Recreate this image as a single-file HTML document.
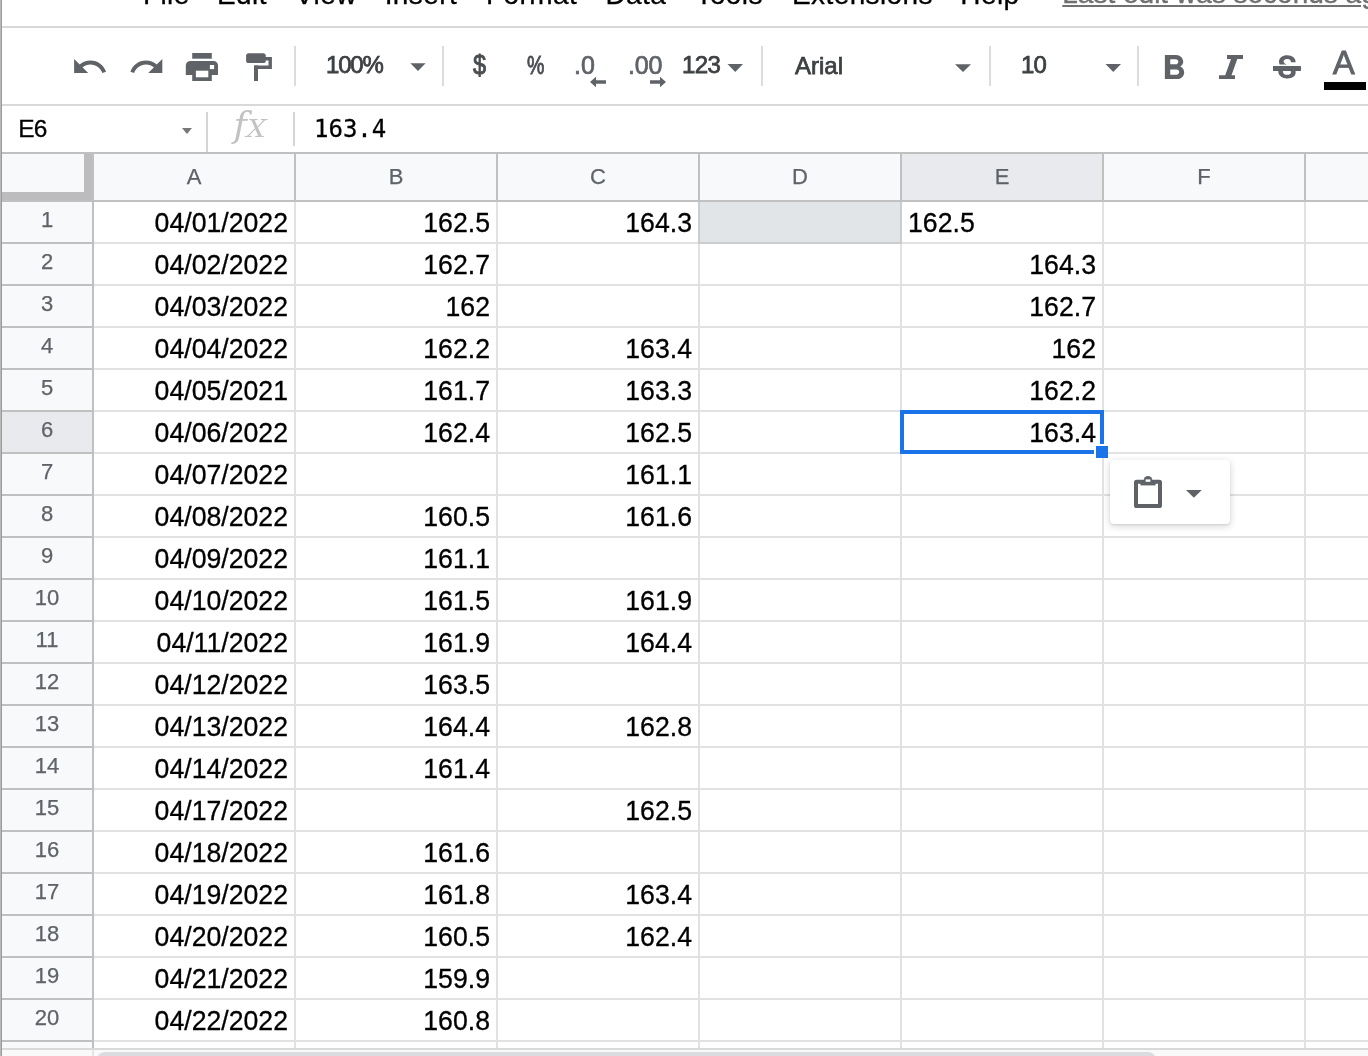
<!DOCTYPE html>
<html lang="en"><head><meta charset="utf-8"><title>Sheet</title>
<style>
html,body{margin:0;padding:0;background:#fff;}
body{width:1368px;height:1056px;overflow:hidden;position:relative;font-family:"Liberation Sans",sans-serif;}
div{position:absolute;box-sizing:border-box;}
svg{position:absolute;overflow:visible;}
.hl{background:#c0c0c0;}
.gl{background:#e2e2e2;}
.menu{top:-23px;height:36px;line-height:36px;font-size:28px;color:#000;white-space:nowrap;letter-spacing:0.4px;-webkit-text-stroke:0.3px;}
.tb{font-size:24px;color:#3c4043;white-space:nowrap;line-height:30px;height:30px;-webkit-text-stroke:0.75px #3c4043;}
.sep{width:2px;top:46px;height:40px;background:#dadce0;}
.ch{top:153.5px;height:46px;line-height:46px;width:200px;text-align:center;font-size:22px;color:#5f6368;-webkit-text-stroke:0.25px #5f6368;}
.rh{left:2px;width:90px;height:40px;line-height:36.5px;text-align:center;font-size:22px;color:#5f6368;-webkit-text-stroke:0.25px #5f6368;}
.c{height:40px;line-height:42px;font-size:26.67px;color:#000;white-space:nowrap;width:188px;text-align:right;transform:scaleY(1.07);transform-origin:0 30.4px;-webkit-text-stroke:0.3px #000;}
.l{text-align:left;}
#w{left:0;top:0;width:1368px;height:1056px;will-change:transform;}
</style></head><body><div id="w">

<div style="left:0;top:0;width:1px;height:1056px;background:#b9b9b9"></div>
<div style="left:1px;top:0;width:1px;height:1056px;background:#9b9b9b"></div>
<div style="left:2px;top:26px;width:1366px;height:2px;background:#d9d9d9"></div>
<div class="menu" style="left:143px">File</div>
<div class="menu" style="left:217px">Edit</div>
<div class="menu" style="left:295px">View</div>
<div class="menu" style="left:384.7px">Insert</div>
<div class="menu" style="left:486px">Format</div>
<div class="menu" style="left:605.4px">Data</div>
<div class="menu" style="left:695.5px">Tools</div>
<div class="menu" style="left:792px">Extensions</div>
<div class="menu" style="left:960.3px">Help</div>
<div class="menu" style="left:1062.3px;top:-24px;letter-spacing:0;color:#707070;-webkit-text-stroke:0.4px #707070;text-decoration:underline;text-decoration-thickness:2.3px;text-underline-offset:2px">Last edit was seconds ago</div>
<div style="left:2px;top:104px;width:1366px;height:2px;background:#d9d9d9"></div>
<div class="sep" style="left:294px"></div>
<div class="sep" style="left:442px"></div>
<div class="sep" style="left:761px"></div>
<div class="sep" style="left:989px"></div>
<div class="sep" style="left:1137px"></div>
<svg style="left:70.9px;top:48px" width="37.44" height="37.44" viewBox="0 0 24 24"><path fill="#5f6368" d="M12.5 8c-2.65 0-5.05.99-6.9 2.6L2 7v9h9l-3.62-3.62c1.39-1.16 3.16-1.88 5.12-1.88 3.54 0 6.55 2.31 7.6 5.5l2.37-.78C21.08 11.03 17.15 8 12.5 8z"/></svg>
<svg style="left:127.7px;top:48px" width="37.44" height="37.44" viewBox="0 0 24 24"><path fill="#5f6368" d="M18.4 10.6C16.55 8.99 14.15 8 11.5 8c-4.65 0-8.58 3.03-9.96 7.22L3.9 16c1.05-3.19 4.05-5.5 7.6-5.5 1.95 0 3.73.72 5.12 1.88L13 16h9V7l-3.6 3.6z"/></svg>
<svg style="left:0;top:0" width="1368" height="110">
<rect x="192.2" y="53" width="19.6" height="5.7" fill="#5f6368"/>
<path fill="#5f6368" d="M185.8 75V65.5a4.5 4.5 0 0 1 4.5-4.5h23.2a4.5 4.5 0 0 1 4.5 4.5V75z"/>
<rect x="192.2" y="74" width="19.6" height="7" fill="#5f6368"/>
<rect x="195.9" y="70.7" width="12.4" height="6.6" fill="#fff"/>
<rect x="209.9" y="65" width="4.2" height="4.1" fill="#fff"/>
<rect x="246.1" y="53.2" width="19.7" height="9.8" rx="2.6" fill="#5f6368"/>
<path fill="none" stroke="#5f6368" stroke-width="3.4" d="M265 58.8h5.2v8.4h-14.2v13.8"/>
<rect x="254" y="65.5" width="4" height="15.5" fill="#5f6368"/>
</svg>
<div class="tb" style="left:326px;top:50px;letter-spacing:-1.2px">100%</div>
<svg style="left:0;top:0" width="1368" height="1056"><path fill="#5f6368" d="M410.4 63.3H425.6L418.0 71z"/></svg>
<div class="tb" style="left:472.8px;top:50px;font-size:28px;transform:scaleX(0.84);transform-origin:0 0;color:#4a4d51;-webkit-text-stroke:0.9px #4a4d51">$</div>
<div class="tb" style="left:526.5px;top:50px;font-size:25px;transform:scaleX(0.78);transform-origin:0 0;color:#4a4d51;-webkit-text-stroke:0.9px #4a4d51">%</div>
<div class="tb" style="left:574px;top:50px;letter-spacing:0px;font-size:25px;color:#5f6368;-webkit-text-stroke:0.7px #5f6368">.0</div>
<div class="tb" style="left:628px;top:50px;letter-spacing:-0.2px;font-size:25px;color:#5f6368;-webkit-text-stroke:0.7px #5f6368">.00</div>
<svg style="left:0;top:0" width="1368" height="110"><path fill="#5f6368" d="M590 82l6-5.2v3.5h10v3.4h-10v3.5z"/><path fill="#5f6368" d="M666 82l-6-5.2v3.5h-10v3.4h10v3.5z"/></svg>
<div class="tb" style="left:682px;top:50.4px;letter-spacing:-0.6px">123</div>
<svg style="left:0;top:0" width="1368" height="1056"><path fill="#5f6368" d="M727.5 64H743L735.25 72z"/></svg>
<div class="tb" style="left:795px;top:50.7px">Arial</div>
<svg style="left:0;top:0" width="1368" height="1056"><path fill="#5f6368" d="M955 64.2H971L963.0 72z"/></svg>
<div class="tb" style="left:1021px;top:50px;letter-spacing:-0.8px">10</div>
<svg style="left:0;top:0" width="1368" height="1056"><path fill="#5f6368" d="M1105.5 64H1121L1113.25 72z"/></svg>
<svg style="left:0;top:0" width="1368" height="110"><path transform="translate(1152.3 48) scale(1.795 1.72)" fill="#5f6368" d="M15.6 10.79c.97-.67 1.65-1.77 1.65-2.79 0-2.26-1.75-4-4-4H7v14h7.04c2.09 0 3.71-1.7 3.71-3.79 0-1.52-.86-2.82-2.15-3.42zM10 6.5h3c.83 0 1.5.67 1.5 1.5s-.67 1.5-1.5 1.5h-3v-3zm3.5 9H10v-3h3.5c.83 0 1.5.67 1.5 1.5s-.67 1.5-1.5 1.5z"/></svg>
<svg style="left:0;top:0" width="1368" height="110">
<path fill="#5f6368" d="M1227 55H1243V59H1237.3L1231.5 75.2H1235V79H1219V75.2H1225.2L1231 59H1227z"/>
<rect x="1273" y="67" width="27.9" height="4" fill="#5f6368"/>
<rect x="1324" y="82" width="42" height="8" fill="#000"/>
</svg>
<svg style="left:0;top:0" width="1368" height="110"><path transform="translate(1268.35 50.6) scale(1.55)" fill="#5f6368" d="M7.24 8.75c-.26-.48-.39-1.03-.39-1.67 0-.61.13-1.16.4-1.67.26-.5.63-.93 1.11-1.29.48-.35 1.05-.63 1.7-.83.66-.19 1.39-.29 2.18-.29.81 0 1.54.11 2.21.34.66.22 1.23.54 1.69.94.47.4.83.88 1.08 1.43.25.55.38 1.15.38 1.81h-3.01c0-.31-.05-.59-.15-.85-.09-.27-.24-.49-.44-.68-.2-.19-.45-.33-.75-.44-.3-.1-.66-.16-1.06-.16-.39 0-.74.04-1.03.13-.29.09-.53.21-.72.36-.19.16-.34.34-.44.55-.1.21-.15.43-.15.66 0 .48.25.88.74 1.21.38.25.77.48 1.41.7H7.39c-.05-.08-.11-.17-.15-.25zM21 12v-2H3v2h9.62c.18.07.4.14.55.2.37.17.66.34.87.51.21.17.35.36.43.57.07.2.11.43.11.69 0 .23-.05.45-.14.66-.09.2-.23.38-.42.53-.19.15-.42.26-.71.35-.29.08-.63.13-1.01.13-.43 0-.83-.04-1.18-.13s-.66-.23-.91-.42c-.25-.19-.45-.44-.59-.75-.14-.31-.25-.76-.25-1.21H6.4c0 .55.08 1.13.24 1.58.16.45.37.85.65 1.21.28.35.6.66.98.92.37.26.78.48 1.22.65.44.17.9.3 1.38.39.48.08.96.13 1.44.13.8 0 1.53-.09 2.18-.28s1.21-.45 1.67-.79c.46-.34.82-.77 1.07-1.27s.38-1.07.38-1.71c0-.6-.1-1.14-.31-1.61-.05-.11-.11-.23-.17-.33H21z"/></svg>
<div style="left:1332.7px;top:41.5px;font-size:33px;line-height:42px;color:#5f6368;-webkit-text-stroke:0.8px #5f6368">A</div>
<div style="left:18.3px;top:114px;font-size:24.5px;line-height:30px;color:#000;letter-spacing:-1px;-webkit-text-stroke:0.3px #000">E6</div>
<svg style="left:0;top:0" width="1368" height="1056"><path fill="#777" d="M182 128H192L187.0 134z"/></svg>
<div style="left:206px;top:112px;width:2px;height:40px;background:#d5d5d5"></div>
<div style="left:293px;top:112px;width:2px;height:34px;background:#d5d5d5"></div>
<div style="left:233.5px;top:98px;line-height:48px;color:#c2c2c2;white-space:nowrap;font-style:italic"><span style="position:static;font-family:'DejaVu Serif',serif;font-size:36px">f</span><span style="position:static;font-family:'Noto Serif CJK SC','Liberation Serif',serif;font-size:35px;margin-left:-2.5px">x</span></div>
<div style="left:314px;top:114px;font-family:'DejaVu Sans Mono','Liberation Mono',monospace;font-size:24px;line-height:30px;color:#000;-webkit-text-stroke:0.3px #000">163.4</div>
<div style="left:2px;top:154px;width:1366px;height:46px;background:#f8f9fa"></div>
<div style="left:2px;top:202px;width:90px;height:846px;background:#f8f9fa"></div>
<div style="left:902px;top:154px;width:200px;height:46px;background:#e8eaed"></div>
<div style="left:2px;top:412px;width:90px;height:40px;background:#e8eaed"></div>
<div class="gl" style="left:294px;top:202px;width:2px;height:846px"></div>
<div class="gl" style="left:496px;top:202px;width:2px;height:846px"></div>
<div class="gl" style="left:698px;top:202px;width:2px;height:846px"></div>
<div class="gl" style="left:900px;top:202px;width:2px;height:846px"></div>
<div class="gl" style="left:1102px;top:202px;width:2px;height:846px"></div>
<div class="gl" style="left:1304px;top:202px;width:2px;height:846px"></div>
<div class="gl" style="left:94px;top:242px;width:1274px;height:2px"></div>
<div class="gl" style="left:94px;top:284px;width:1274px;height:2px"></div>
<div class="gl" style="left:94px;top:326px;width:1274px;height:2px"></div>
<div class="gl" style="left:94px;top:368px;width:1274px;height:2px"></div>
<div class="gl" style="left:94px;top:410px;width:1274px;height:2px"></div>
<div class="gl" style="left:94px;top:452px;width:1274px;height:2px"></div>
<div class="gl" style="left:94px;top:494px;width:1274px;height:2px"></div>
<div class="gl" style="left:94px;top:536px;width:1274px;height:2px"></div>
<div class="gl" style="left:94px;top:578px;width:1274px;height:2px"></div>
<div class="gl" style="left:94px;top:620px;width:1274px;height:2px"></div>
<div class="gl" style="left:94px;top:662px;width:1274px;height:2px"></div>
<div class="gl" style="left:94px;top:704px;width:1274px;height:2px"></div>
<div class="gl" style="left:94px;top:746px;width:1274px;height:2px"></div>
<div class="gl" style="left:94px;top:788px;width:1274px;height:2px"></div>
<div class="gl" style="left:94px;top:830px;width:1274px;height:2px"></div>
<div class="gl" style="left:94px;top:872px;width:1274px;height:2px"></div>
<div class="gl" style="left:94px;top:914px;width:1274px;height:2px"></div>
<div class="gl" style="left:94px;top:956px;width:1274px;height:2px"></div>
<div class="gl" style="left:94px;top:998px;width:1274px;height:2px"></div>
<div class="gl" style="left:94px;top:1040px;width:1274px;height:2px"></div>
<div class="hl" style="left:2px;top:152px;width:1366px;height:2px"></div>
<div class="hl" style="left:2px;top:200px;width:1366px;height:2px"></div>
<div class="hl" style="left:92px;top:154px;width:2px;height:894px"></div>
<div class="hl" style="left:294px;top:154px;width:2px;height:46px"></div>
<div class="hl" style="left:496px;top:154px;width:2px;height:46px"></div>
<div class="hl" style="left:698px;top:154px;width:2px;height:46px"></div>
<div class="hl" style="left:900px;top:154px;width:2px;height:46px"></div>
<div class="hl" style="left:1102px;top:154px;width:2px;height:46px"></div>
<div class="hl" style="left:1304px;top:154px;width:2px;height:46px"></div>
<div class="hl" style="left:2px;top:242px;width:90px;height:2px"></div>
<div class="hl" style="left:2px;top:284px;width:90px;height:2px"></div>
<div class="hl" style="left:2px;top:326px;width:90px;height:2px"></div>
<div class="hl" style="left:2px;top:368px;width:90px;height:2px"></div>
<div class="hl" style="left:2px;top:410px;width:90px;height:2px"></div>
<div class="hl" style="left:2px;top:452px;width:90px;height:2px"></div>
<div class="hl" style="left:2px;top:494px;width:90px;height:2px"></div>
<div class="hl" style="left:2px;top:536px;width:90px;height:2px"></div>
<div class="hl" style="left:2px;top:578px;width:90px;height:2px"></div>
<div class="hl" style="left:2px;top:620px;width:90px;height:2px"></div>
<div class="hl" style="left:2px;top:662px;width:90px;height:2px"></div>
<div class="hl" style="left:2px;top:704px;width:90px;height:2px"></div>
<div class="hl" style="left:2px;top:746px;width:90px;height:2px"></div>
<div class="hl" style="left:2px;top:788px;width:90px;height:2px"></div>
<div class="hl" style="left:2px;top:830px;width:90px;height:2px"></div>
<div class="hl" style="left:2px;top:872px;width:90px;height:2px"></div>
<div class="hl" style="left:2px;top:914px;width:90px;height:2px"></div>
<div class="hl" style="left:2px;top:956px;width:90px;height:2px"></div>
<div class="hl" style="left:2px;top:998px;width:90px;height:2px"></div>
<div class="hl" style="left:2px;top:1040px;width:90px;height:2px"></div>
<div style="left:84px;top:154px;width:8px;height:46px;background:#bcbcbe"></div>
<div style="left:2px;top:192px;width:90px;height:8px;background:#bcbcbe"></div>
<div style="left:698px;top:202px;width:204px;height:42px;background:rgba(95,110,125,0.18)"></div>
<div class="ch" style="left:94px">A</div>
<div class="ch" style="left:296px">B</div>
<div class="ch" style="left:498px">C</div>
<div class="ch" style="left:700px">D</div>
<div class="ch" style="left:902px">E</div>
<div class="ch" style="left:1104px">F</div>
<div class="rh" style="top:202px">1</div>
<div class="rh" style="top:244px">2</div>
<div class="rh" style="top:286px">3</div>
<div class="rh" style="top:328px">4</div>
<div class="rh" style="top:370px">5</div>
<div class="rh" style="top:412px">6</div>
<div class="rh" style="top:454px">7</div>
<div class="rh" style="top:496px">8</div>
<div class="rh" style="top:538px">9</div>
<div class="rh" style="top:580px">10</div>
<div class="rh" style="top:622px">11</div>
<div class="rh" style="top:664px">12</div>
<div class="rh" style="top:706px">13</div>
<div class="rh" style="top:748px">14</div>
<div class="rh" style="top:790px">15</div>
<div class="rh" style="top:832px">16</div>
<div class="rh" style="top:874px">17</div>
<div class="rh" style="top:916px">18</div>
<div class="rh" style="top:958px">19</div>
<div class="rh" style="top:1000px">20</div>
<div class="c" style="left:100px;top:202px">04/01/2022</div>
<div class="c" style="left:302px;top:202px">162.5</div>
<div class="c" style="left:504px;top:202px">164.3</div>
<div class="c" style="left:100px;top:244px">04/02/2022</div>
<div class="c" style="left:302px;top:244px">162.7</div>
<div class="c" style="left:100px;top:286px">04/03/2022</div>
<div class="c" style="left:302px;top:286px">162</div>
<div class="c" style="left:100px;top:328px">04/04/2022</div>
<div class="c" style="left:302px;top:328px">162.2</div>
<div class="c" style="left:504px;top:328px">163.4</div>
<div class="c" style="left:100px;top:370px">04/05/2021</div>
<div class="c" style="left:302px;top:370px">161.7</div>
<div class="c" style="left:504px;top:370px">163.3</div>
<div class="c" style="left:100px;top:412px">04/06/2022</div>
<div class="c" style="left:302px;top:412px">162.4</div>
<div class="c" style="left:504px;top:412px">162.5</div>
<div class="c" style="left:100px;top:454px">04/07/2022</div>
<div class="c" style="left:504px;top:454px">161.1</div>
<div class="c" style="left:100px;top:496px">04/08/2022</div>
<div class="c" style="left:302px;top:496px">160.5</div>
<div class="c" style="left:504px;top:496px">161.6</div>
<div class="c" style="left:100px;top:538px">04/09/2022</div>
<div class="c" style="left:302px;top:538px">161.1</div>
<div class="c" style="left:100px;top:580px">04/10/2022</div>
<div class="c" style="left:302px;top:580px">161.5</div>
<div class="c" style="left:504px;top:580px">161.9</div>
<div class="c" style="left:100px;top:622px">04/11/2022</div>
<div class="c" style="left:302px;top:622px">161.9</div>
<div class="c" style="left:504px;top:622px">164.4</div>
<div class="c" style="left:100px;top:664px">04/12/2022</div>
<div class="c" style="left:302px;top:664px">163.5</div>
<div class="c" style="left:100px;top:706px">04/13/2022</div>
<div class="c" style="left:302px;top:706px">164.4</div>
<div class="c" style="left:504px;top:706px">162.8</div>
<div class="c" style="left:100px;top:748px">04/14/2022</div>
<div class="c" style="left:302px;top:748px">161.4</div>
<div class="c" style="left:100px;top:790px">04/17/2022</div>
<div class="c" style="left:504px;top:790px">162.5</div>
<div class="c" style="left:100px;top:832px">04/18/2022</div>
<div class="c" style="left:302px;top:832px">161.6</div>
<div class="c" style="left:100px;top:874px">04/19/2022</div>
<div class="c" style="left:302px;top:874px">161.8</div>
<div class="c" style="left:504px;top:874px">163.4</div>
<div class="c" style="left:100px;top:916px">04/20/2022</div>
<div class="c" style="left:302px;top:916px">160.5</div>
<div class="c" style="left:504px;top:916px">162.4</div>
<div class="c" style="left:100px;top:958px">04/21/2022</div>
<div class="c" style="left:302px;top:958px">159.9</div>
<div class="c" style="left:100px;top:1000px">04/22/2022</div>
<div class="c" style="left:302px;top:1000px">160.8</div>
<div class="c l" style="left:908px;top:202px">162.5</div>
<div class="c" style="left:908px;top:244px">164.3</div>
<div class="c" style="left:908px;top:286px">162.7</div>
<div class="c" style="left:908px;top:328px">162</div>
<div class="c" style="left:908px;top:370px">162.2</div>
<div class="c" style="left:908px;top:412px">163.4</div>
<div style="left:900px;top:410px;width:204px;height:44px;border:4px solid #1a73e8"></div>
<div style="left:1094px;top:444px;width:14px;height:14px;background:#fff"></div>
<div style="left:1096px;top:446px;width:12px;height:12px;background:#1a73e8"></div>
<div style="left:1110px;top:460px;width:120px;height:64px;background:#fff;border-radius:4px;box-shadow:0 2px 6px 1px rgba(60,64,67,0.18),0 1px 2px rgba(60,64,67,0.12)"></div>
<svg style="left:0;top:0" width="1368" height="1056">
<circle cx="1148" cy="480.3" r="4.3" fill="#5f6368"/>
<rect x="1134" y="479.7" width="28" height="28.3" rx="2.6" fill="#5f6368"/>
<rect x="1138" y="483.8" width="20" height="20.2" fill="#fff"/>
<rect x="1140.5" y="483" width="15" height="2.4" fill="#5f6368"/>
<rect x="1145.6" y="479.4" width="4.8" height="2.4" fill="#fff"/>
<path fill="#5f6368" d="M1186 490H1201.8L1193.9 497.8z"/>
</svg>
<div style="left:2px;top:1048px;width:1366px;height:2px;background:#d9d9d9"></div>
<div style="left:2px;top:1050px;width:1366px;height:6px;background:#f9f9fa"></div>
<div style="left:92px;top:1050px;width:2px;height:6px;background:#e4e4e4"></div>
<div style="left:97px;top:1052px;width:1059px;height:16px;background:#dadce0;border-radius:8px"></div>
</div></body></html>
